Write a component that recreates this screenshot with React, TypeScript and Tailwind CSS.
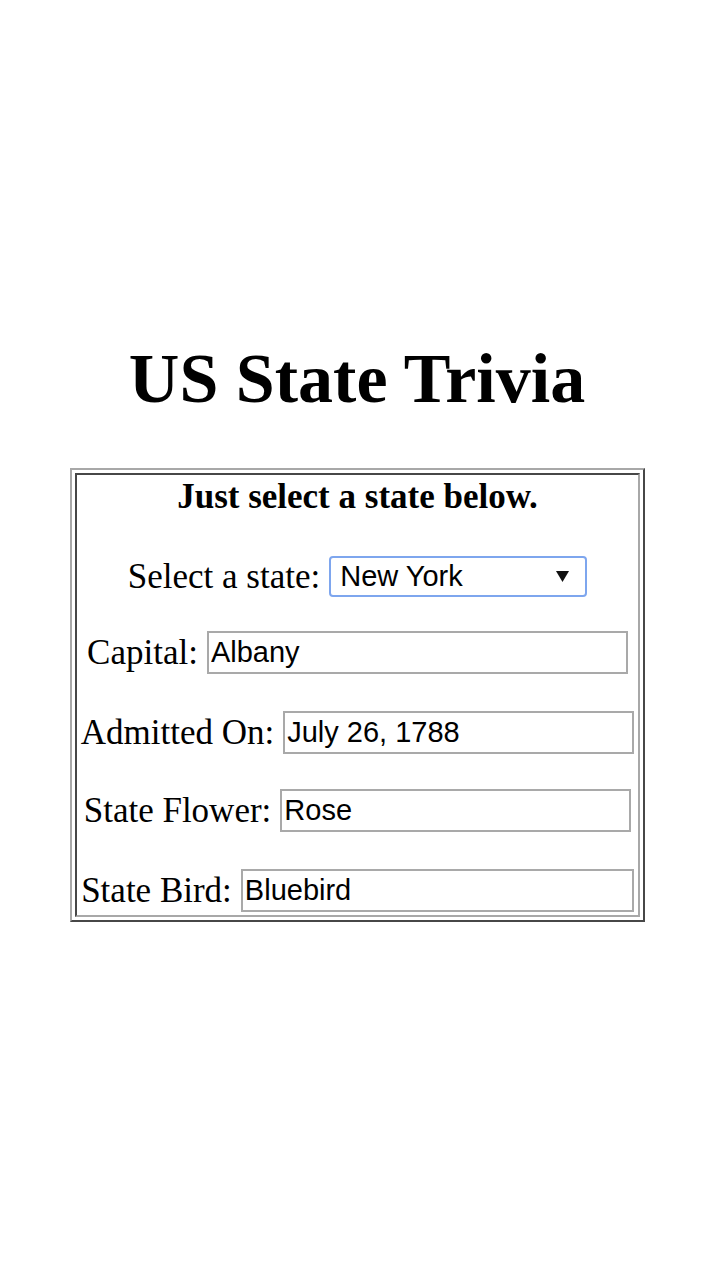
import React from 'react';

interface Field {
  label: string;
  value: string;
  width: string;
  gap: string;
}

const fields: Field[] = [
  { label: 'Capital:', value: 'Albany', width: 'w-[421px]', gap: 'mt-[33px]' },
  { label: 'Admitted On:', value: 'July 26, 1788', width: 'w-[351px]', gap: 'mt-[37px]' },
  { label: 'State Flower:', value: 'Rose', width: 'w-[351px]', gap: 'mt-[35px]' },
  { label: 'State Bird:', value: 'Bluebird', width: 'w-[393px]', gap: 'mt-[37px]' },
];

export default function App() {
  return (
    <div className="min-h-[1280px] w-[714px] bg-white pt-[339px] font-['Liberation_Serif','Times_New_Roman',serif] text-black">
      <h1 className="text-center text-[70px] font-bold leading-[80px]">US State Trivia</h1>

      <div className="mt-[49px] ml-[70px] w-[575px] border-2 border-t-[#a8a8a8] border-l-[#a8a8a8] border-b-[#474747] border-r-[#474747] p-[3px]">
        <div className="border-2 border-t-[#474747] border-l-[#474747] border-b-[#a8a8a8] border-r-[#a8a8a8] pt-[2px] pb-[3px]">
          <p className="text-center text-[35px] font-bold leading-[40px]">Just select a state below.</p>

          <div className="mt-[38px] flex h-[43px] items-center justify-center gap-[9px]">
            <span className="text-[35px] leading-[43px]">Select a state:</span>
            <div className="flex h-[41px] w-[258px] items-center justify-between rounded-[4px] border-2 border-[#7ea6ee] pl-[9px] pr-[16px] font-['Liberation_Sans',Arial,sans-serif] text-[29px]">
              <span>New York</span>
              <svg width="13" height="11" viewBox="0 0 13 11">
                <path d="M0 0 H13 L6.5 11 Z" fill="#111" />
              </svg>
            </div>
          </div>

          {fields.map((f, i) => (
            <div key={i} className={`${f.gap} flex h-[43px] items-center justify-center gap-[9px]`}>
              <span className="whitespace-nowrap text-[35px] leading-[43px]">{f.label}</span>
              <input
                readOnly
                value={f.value}
                className={`${f.width} h-[43px] border-2 border-[#a9a9a9] px-[2px] font-['Liberation_Sans',Arial,sans-serif] text-[29px] text-black outline-none`}
              />
            </div>
          ))}
        </div>
      </div>
    </div>
  );
}
